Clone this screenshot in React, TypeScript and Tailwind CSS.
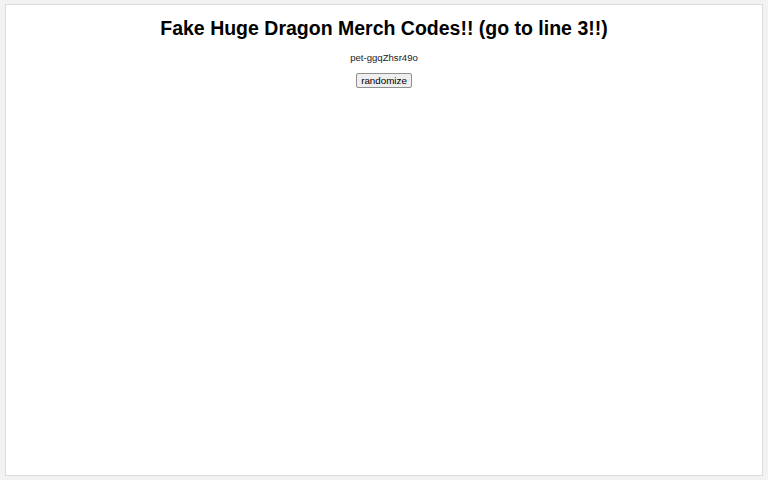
import { useState } from 'react'

const chars = 'abcdefghijklmnopqrstuvwxyzABCDEFGHIJKLMNOPQRSTUVWXYZ0123456789'

function makeCode() {
  let s = ''
  for (let i = 0; i < 10; i++) s += chars[Math.floor(Math.random() * chars.length)]
  return 'pet-' + s
}

export default function App() {
  const [code, setCode] = useState('pet-ggqZhsr49o')

  return (
    <div className="h-[480px] w-full bg-[#f2f2f2] p-[4px_5px_4px_5px] font-['Liberation_Sans',Arial,sans-serif]">
      <div className="flex h-full flex-col items-center border border-[#dcdcdc] bg-white">
        <h1 className="mt-[11px] text-[19.5px] font-bold leading-[24px] text-black">
          Fake Huge Dragon Merch Codes!! (go to line 3!!)
        </h1>
        <p className="mt-[12px] text-[9.6px] leading-[12px] text-[#222]">{code}</p>
        <button
          onClick={() => setCode(makeCode())}
          className="mt-[9px] h-[15px] rounded-[2px] border border-[#8f8f8f] bg-[#efefef] px-[4px] text-[9.8px] leading-[12px] text-black"
        >
          randomize
        </button>
      </div>
    </div>
  )
}
